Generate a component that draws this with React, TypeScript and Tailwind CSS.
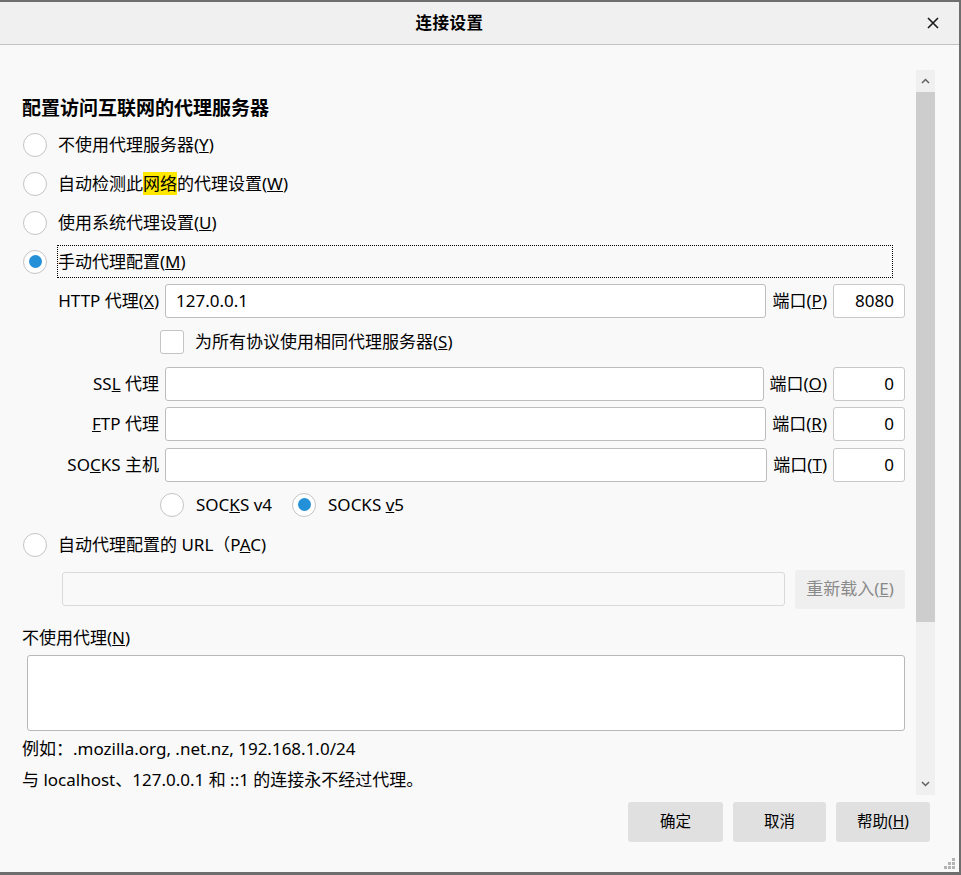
import React from 'react';

function Radio({ checked = false }: { checked?: boolean }) {
  return (
    <span className="w-6 h-6 shrink-0 rounded-full border border-[#c4c4c4] bg-white flex items-center justify-center">
      {checked && <span className="w-[13px] h-[13px] rounded-full bg-[#2390d8]" />}
    </span>
  );
}

function Field({ children, className = '' }: { children?: React.ReactNode; className?: string }) {
  return (
    <div className={`h-full bg-white border border-[#bdbdbd] rounded-[3px] flex items-center ${className}`}>{children}</div>
  );
}

function ProxyRow({
  label,
  port,
  portValue,
  value,
  focused = false,
  className = '',
}: {
  label: React.ReactNode;
  port: React.ReactNode;
  portValue: string;
  value?: string;
  focused?: boolean;
  className?: string;
}) {
  return (
    <div className={`flex items-center h-[34px] ${className}`}>
      <span className="w-[143px] shrink-0 text-right pr-[6px] whitespace-nowrap">{label}</span>
      <Field className={`flex-1 pl-[10px] ${focused ? 'border-[#8f8f8f]' : ''}`}>{value}</Field>
      <span className="px-[6px] whitespace-nowrap">{port}</span>
      <Field className="w-[72px] shrink-0 justify-end pr-[10px] border-[#c8c8c8]">{portValue}</Field>
    </div>
  );
}

export default function App() {
  return (
    <div className="w-[961px] h-[875px] flex flex-col bg-[#f9f9f9] text-black text-[17px] border-t-2 border-r-2 border-b-[3px] border-[#6e6e6e] font-['Noto_Sans','Noto_Sans_CJK_SC',sans-serif] relative overflow-hidden">
      {/* title bar */}
      <div className="h-[43px] shrink-0 bg-[#f0f0f0] border-b-[1.5px] border-[#c2c2c2] flex items-center justify-center pr-[60px] relative">
        <span className="font-bold text-[16.5px] tracking-[0.5px]">连接设置</span>
        <svg className="absolute right-[20px] top-[15px]" width="12" height="12" viewBox="0 0 12 12">
          <path d="M1 1L11 11M11 1L1 11" stroke="#1a1a1a" strokeWidth="1.6" />
        </svg>
      </div>

      {/* scroll pane */}
      <div className="mt-[25px] h-[725px] flex shrink-0">
        <div className="flex-1 pl-[22px] pr-[11px] overflow-hidden flex flex-col">
          <div className="h-[26px] mt-[25px] flex items-center font-bold text-[19px]">配置访问互联网的代理服务器</div>

          <div className="mt-[4px] flex flex-col">
            <div className="h-[39px] flex items-center pl-[1px] gap-[11px]">
              <Radio />
              <span>不使用代理服务器(<u>Y</u>)</span>
            </div>
            <div className="h-[39px] flex items-center pl-[1px] gap-[11px]">
              <Radio />
              <span>
                自动检测此<span className="bg-[#ffe800]">网络</span>的代理设置(<u>W</u>)
              </span>
            </div>
            <div className="h-[39px] flex items-center pl-[1px] gap-[11px]">
              <Radio />
              <span>使用系统代理设置(<u>U</u>)</span>
            </div>
            <div className="h-[39px] flex items-center pl-[1px]">
              <Radio checked />
              <span className="ml-[10px] mr-[12px] flex-1 h-[33px] border border-dotted border-black flex items-center pl-[0px]">
                手动代理配置(<u>M</u>)
              </span>
            </div>
          </div>

          <ProxyRow
            className="mt-[3px]"
            label={<>HTTP 代理(<u>X</u>)</>}
            port={<>端口(<u>P</u>)</>}
            value="127.0.0.1"
            portValue="8080"
            focused
          />

          <div className="h-[48px] flex items-center pl-[138px] gap-[11px]">
            <span className="w-6 h-6 shrink-0 rounded-[3px] border border-[#c4c4c4] bg-white" />
            <span>为所有协议使用相同代理服务器(<u>S</u>)</span>
          </div>

          <ProxyRow className="mt-[1px]" label={<>SS<u>L</u> 代理</>} port={<>端口(<u>O</u>)</>} portValue="0" />
          <ProxyRow className="mt-[6px]" label={<><u>F</u>TP 代理</>} port={<>端口(<u>R</u>)</>} portValue="0" />
          <ProxyRow className="mt-[7px]" label={<>SO<u>C</u>KS 主机</>} port={<>端口(<u>T</u>)</>} portValue="0" />

          <div className="h-[45px] flex items-center pl-[138px]">
            <Radio />
            <span className="ml-[12px]">SOC<u>K</u>S v4</span>
            <span className="ml-[20px]"><Radio checked /></span>
            <span className="ml-[12px]">SOCKS <u>v</u>5</span>
          </div>

          <div className="h-[35px] flex items-center pl-[1px] gap-[11px]">
            <Radio />
            <span>自动代理配置的 URL（P<u>A</u>C)</span>
          </div>

          <div className="h-[48px] mt-[3px] flex items-center pl-[40px] gap-[10px]">
            <div className="flex-1 h-[34px] rounded-[3px] border border-[#dadada] bg-[#f9f9f9]" />
            <div className="w-[110px] h-[39px] rounded-[3px] bg-[#efefef] text-[#8a8a8a] flex items-center justify-center">
              重新载入(<u>E</u>)
            </div>
          </div>

          <div className="h-[26px] mt-[12px] flex items-center">不使用代理(<u>N</u>)</div>

          <div className="ml-[5px] mt-[4px] h-[76px] shrink-0 bg-white border border-[#b8b8b8] rounded-[3px]" />

          <div className="h-[30px] flex items-center mt-[3px] whitespace-nowrap">例如：.mozilla.org, .net.nz, 192.168.1.0/24</div>
          <div className="h-[30px] flex items-center mt-[1px] whitespace-nowrap">与 localhost、127.0.0.1 和 ::1 的连接永不经过代理。</div>
        </div>

        {/* scrollbar */}
        <div className="w-[19px] shrink-0 mr-[24px] bg-[#f0f0f0] flex flex-col">
          <div className="h-[22px] flex items-center justify-center">
            <svg width="9" height="6" viewBox="0 0 9 6">
              <path d="M1 5L4.5 1.5L8 5" stroke="#606060" strokeWidth="1.5" fill="none" />
            </svg>
          </div>
          <div className="h-[530px] bg-[#cdcdcd]" />
          <div className="flex-1 flex items-end justify-center pb-[8px]">
            <svg width="9" height="6" viewBox="0 0 9 6">
              <path d="M1 1L4.5 4.5L8 1" stroke="#606060" strokeWidth="1.5" fill="none" />
            </svg>
          </div>
        </div>
      </div>

      {/* buttons */}
      <div className="mt-[7px] flex justify-end gap-[10px] pr-[29px]">
        <button className="w-[95px] h-[40px] rounded-[3px] bg-[#e0e0e0] text-[15.5px]">确定</button>
        <button className="w-[93px] h-[40px] rounded-[3px] bg-[#e0e0e0] text-[15.5px]">取消</button>
        <button className="w-[94px] h-[40px] rounded-[3px] bg-[#e0e0e0] text-[15.5px]">帮助(<u>H</u>)</button>
      </div>

      {/* resize grip */}
      <svg className="absolute right-[3px] bottom-[2px]" width="12" height="12" viewBox="0 0 12 12">
        <rect x="8" y="0" width="3" height="3" fill="#b4b4b4" />
        <rect x="4" y="4" width="3" height="3" fill="#b4b4b4" />
        <rect x="8" y="4" width="3" height="3" fill="#b4b4b4" />
        <rect x="0" y="8" width="3" height="3" fill="#b4b4b4" />
        <rect x="4" y="8" width="3" height="3" fill="#b4b4b4" />
        <rect x="8" y="8" width="3" height="3" fill="#b4b4b4" />
      </svg>
    </div>
  );
}
